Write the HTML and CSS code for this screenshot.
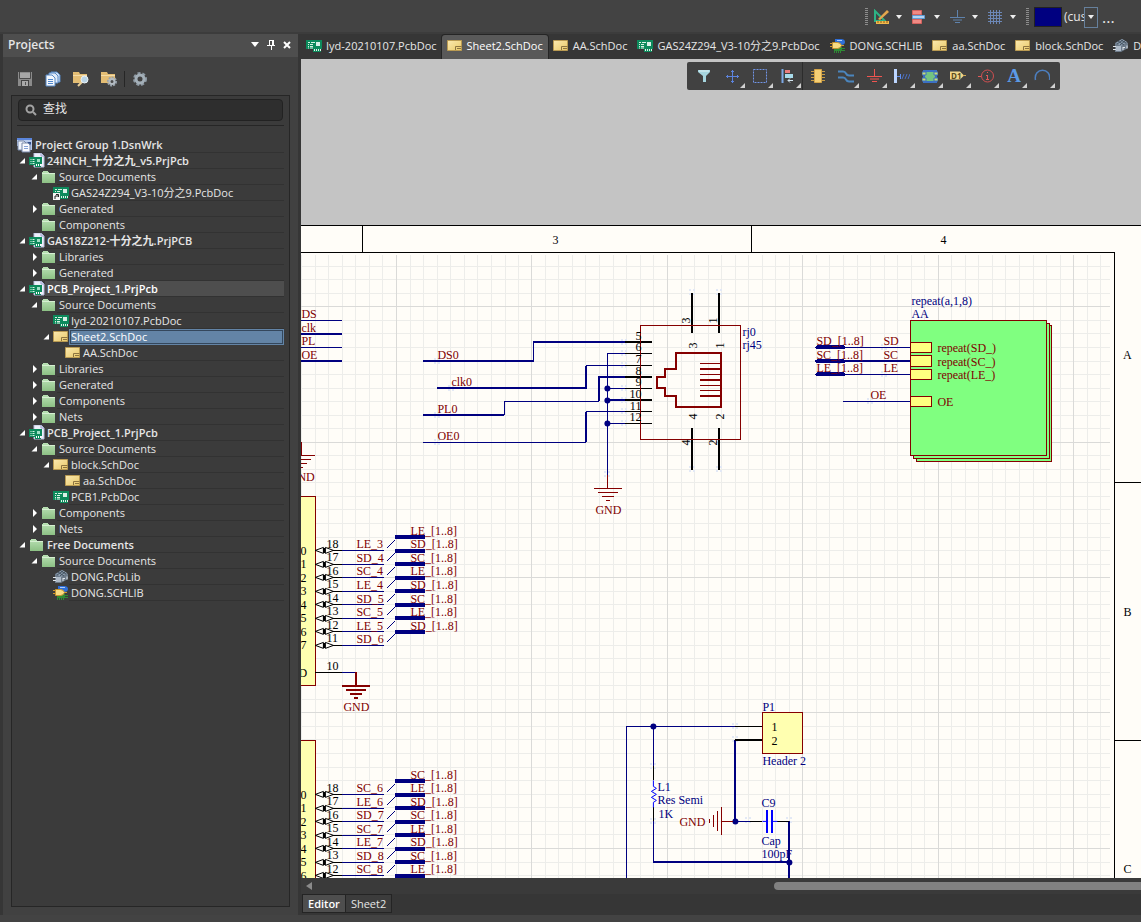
FILE: index.html
```html
<!DOCTYPE html>
<html lang="en">
<head>
<meta charset="utf-8">
<title>Sheet2.SchDoc</title>
<link rel="stylesheet" href="styles.css">
</head>
<body>
<svg class="defs" aria-hidden="true">
  <linearGradient id="gfold" x1="0" y1="0" x2="0" y2="1"><stop offset="0" stop-color="#b9e0b4"/><stop offset="1" stop-color="#8cc084"/></linearGradient>
  <linearGradient id="ysch" x1="0" y1="0" x2="1" y2="1"><stop offset="0" stop-color="#fbe9b0"/><stop offset="1" stop-color="#e9c968"/></linearGradient>
  <symbol id="folder" viewBox="0 0 16 16"><path d="M1 14V3h1V2h5v1h1v1h6v10z" fill="url(#gfold)"/><path d="M1 4.500h13" stroke="#d6efd2"/></symbol>
  <symbol id="sch" viewBox="0 0 16 16"><path d="M.5 2.500h14v10H.5z" fill="url(#ysch)" stroke="#b99a52"/><path d="M8.500 12V8.500h6M10 10.500h4" stroke="#8d7440" fill="none"/></symbol>
  <symbol id="pcb" viewBox="0 0 16 16"><path d="M0 2h16v9h-1v3H7v-3H0z" fill="#0d8a5c"/><path d="M2 4.500h2m1 0h4M2 6.500h1m1 0h3M2 8.500h1m1 0h3M2 10h1m1 0h3" stroke="#d9f3e4"/><path d="M10 4h4v4h-4z" fill="#d9efe6"/><path d="M8.500 11v2m2-2v2m2-2v2m2-2v2" stroke="#dff5ea"/></symbol>
  <symbol id="link" viewBox="0 0 16 16"><use href="#pcb"/><path d="M0 8h7v7H0z" fill="#f4f4f4"/><path d="M2 14v-3h3M3 9.500h2.500V12" stroke="#222" fill="none"/></symbol>
  <symbol id="prj" viewBox="0 0 16 16"><path d="M5 0h7l3 3v11H5z" fill="#eef0fb" stroke="#b9bddd"/><path d="M12 0v3h3" fill="none" stroke="#9aa0cc"/><path d="M0 4h13v7h-1v3H6v-2H0z" fill="#0d8a5c"/><path d="M1.500 6.500h4m-4 2h4m-4 2h4" stroke="#d9f3e4" stroke-dasharray="1 1 2"/><path d="M8 6h3v3H8z" fill="#9fe0c5"/><path d="M7.500 11v2m2-2v2m2-2v2" stroke="#fff"/></symbol>
  <symbol id="group" viewBox="0 0 16 16"><path d="M0 1h15v12H3V9H0z" fill="#b7caec"/><path d="M0 1h15v2H0z" fill="#5b86dc"/><path d="M1 4h6l2 2v7H1z" fill="#edf2fc" stroke="#7787a8"/><path d="M5 6h6l2 2v7H5z" fill="#f8faff" stroke="#7787a8"/><path d="M7 9.500h4m-4 2h4" stroke="#86a2d6"/><path d="M10 5h4v3z" fill="#324f8a"/></symbol>
  <symbol id="pcblib" viewBox="0 0 16 16"><path d="M2 5l7-4 6 4v5l-7 4H2z" fill="#6d7b8a"/><path d="M3 5l6-4 5 3-6 4z" fill="#8ea0b2"/><path d="M5 3l6 4M8 2l5 3M4 6l6-4M7 7l5-4" stroke="#44525f"/><path d="M3 8h5v5H3z" fill="#aebac7"/><path d="M0 8.500h3m-3 3h3M10 9.500h2m2-2v3M10 9v3" stroke="#dfe5ea" fill="none"/></symbol>
  <symbol id="schlib" viewBox="0 0 16 16"><path d="M5 1h6q4 0 4 3t-4 3H5z" fill="#2f6fd8"/><path d="M7 2h5v1H7z" fill="#a8cbff"/><path d="M4 9h8v4H4z" fill="#2f8a35"/><path d="M4.500 12v3m2-3v3m2-3v3m2-3v3M12 10.500h3m-3 2h3" stroke="#2f8a35"/><path d="M0 5.500h3m-3 3h3M11 7.500h3" stroke="#d39a2d"/><path d="M2.500 4.500h5q3 0 4 3-1 3-4 3h-5z" fill="#f8dc83" stroke="#c3922f"/></symbol>
  <symbol id="open" viewBox="0 0 8 8"><path d="M7 1v5.500H1.500z" fill="#fff"/></symbol>
  <symbol id="shut" viewBox="0 0 8 8"><path d="M3 0v8l4-4z" fill="#fff"/></symbol>
  <symbol id="drop" viewBox="0 0 8 8"><path d="M1 2h6L4 6z" fill="#eee"/></symbol>
  <symbol id="save" viewBox="0 0 16 16"><path d="M1 1h14v14H1z" fill="#8b8b8b"/><path d="M3 2h10v5H3z" fill="#a6a6a6"/><path d="M2.500 1v6.500h11V1" fill="none" stroke="#4a4a4a"/><path d="M4 9h8v6H4z" fill="#444"/><path d="M5 10h6v5H5z" fill="#aaa"/><path d="M8.500 11v3" stroke="#555"/></symbol>
  <symbol id="docs" viewBox="0 0 16 16"><path d="M6 1h6l3 3v7H6z" fill="#cfe0f4" stroke="#5788c4"/><path d="M4 2h6l3 3v7H4z" fill="#dfeaf8" stroke="#5788c4"/><path d="M1 4h6l3 3v8H1z" fill="#f2f7fd" stroke="#5788c4"/><path d="M3 8.500h5m-5 2h5m-5 2h5" stroke="#4f86cc"/></symbol>
  <symbol id="ffind" viewBox="0 0 16 16"><path d="M0 1h6l1 2h7v9H0z" fill="#e3bd74"/><path d="M0 4.500h14" stroke="#f4dba6"/><path d="M9 11l-4 4" stroke="#e9cf9a" stroke-width="2"/><circle cx="11.500" cy="8.500" r="3.500" fill="#b9d4e6" stroke="#e9f1f7"/></symbol>
  <symbol id="fgear" viewBox="0 0 16 16"><path d="M0 1h6l1 2h7v9H0z" fill="#e3bd74"/><path d="M0 4.500h14" stroke="#f4dba6"/><circle cx="11" cy="10.500" r="4" fill="none" stroke="#97a1aa" stroke-width="2" stroke-dasharray="2 1"/><circle cx="11" cy="10.500" r="2.500" fill="#4a4a4a" stroke="#b4bcc3" stroke-width="2"/></symbol>
  <symbol id="gear" viewBox="0 0 16 16"><circle cx="8" cy="8" r="6" fill="none" stroke="#8d99a3" stroke-width="2" stroke-dasharray="3 2"/><circle cx="8" cy="8" r="4" fill="none" stroke="#a3afb8" stroke-width="3"/></symbol>
  <symbol id="gnd" viewBox="0 0 16 16"><path d="M8.500 1v7M1 8.500h15M4 11h9M6 13.500h5" stroke="currentColor" fill="none"/></symbol>
</svg>

<header class="toolbar">
  <i class="grip"></i>
  <button class="tool" aria-label="Drawing tools"><svg class="icon"><path d="M2 2v10h10z" fill="none" stroke="#2db184" stroke-width="2"/><path d="M5 10l9-9 2 2-9 8z" fill="#e3a64d"/><path d="M3 12h13v3H3z" fill="#f2b94b"/><path d="M5 12v2m3-2v2m3-2v2m3-2v2" stroke="#8d5d1b"/></svg><svg class="drop"><use href="#drop"/></svg></button>
  <button class="tool" aria-label="Align"><svg class="icon"><path d="M1.500 1.500h9v4h-9zM1.500 10.500h9v4h-9z" fill="#ef8a84" stroke="#d4625e"/><path d="M1.500 6.500h12v3h-12z" fill="#b4d3f1" stroke="#5f9bd4"/></svg><svg class="drop"><use href="#drop"/></svg></button>
  <button class="tool slate" aria-label="Power port"><svg class="icon"><use href="#gnd"/></svg><svg class="drop"><use href="#drop"/></svg></button>
  <button class="tool" aria-label="Grid"><svg class="icon"><path d="M3.500 1v14m3-14v14m3-14v14m3-14v14M1 3.500h14m-14 3h14m-14 3h14m-14 3h14" stroke="#6c87b6"/></svg><svg class="drop"><use href="#drop"/></svg></button>
  <i class="grip second"></i>
  <i class="swatch"></i>
  <span class="custom">(cus</span>
  <button class="pick" aria-label="Color list"><svg class="drop"><use href="#drop"/></svg></button>
  <button class="more" aria-label="More">...</button>
</header>

<div class="work">
  <aside class="panel">
    <div class="head"><h2>Projects</h2>
      <button aria-label="Panel menu"><svg class="mini"><path d="M1 2h8L5 7z" fill="#fff"/></svg></button>
      <button aria-label="Pin"><svg class="mini"><path d="M3 0h5v5h1v1H6v4H5V6H1V5h2z" fill="#fff"/><path d="M4 1h2v4H4z" fill="#4e4e4e"/></svg></button>
      <button aria-label="Close"><svg class="mini"><path d="M2 2l6 6M8 2L2 8" stroke="#fff" stroke-width="2"/></svg></button>
    </div>
    <div class="actions">
      <button aria-label="Save"><svg class="icon"><use href="#save"/></svg></button>
      <button aria-label="Documents"><svg class="icon"><use href="#docs"/></svg></button>
      <button aria-label="Explore"><svg class="icon"><use href="#ffind"/></svg></button>
      <button aria-label="Project options"><svg class="icon"><use href="#fgear"/></svg></button>
      <i class="rule"></i>
      <button aria-label="Settings"><svg class="icon"><use href="#gear"/></svg></button>
    </div>
    <div class="box">
      <label class="search"><svg class="lens"><circle cx="5" cy="5" r="3.500" fill="none" stroke="#a2a2a2" stroke-width="2"/><path d="M8 8l3 3" stroke="#a2a2a2" stroke-width="2"/></svg><input type="text" placeholder="查找" aria-label="查找"></label>
      <ul class="tree">
        <li class="row root"><svg class="icon"><use href="#group"/></svg><span>Project Group 1.DsnWrk</span></li>
        <li class="row bold"><svg class="arrow"><use href="#open"/></svg><svg class="icon"><use href="#prj"/></svg><span>24INCH_十分之九_v5.PrjPcb</span></li>
        <li class="row l2"><svg class="arrow"><use href="#open"/></svg><svg class="icon"><use href="#folder"/></svg><span>Source Documents</span></li>
        <li class="row l3"><i class="arrow"></i><svg class="icon"><use href="#link"/></svg><span>GAS24Z294_V3-10分之9.PcbDoc</span></li>
        <li class="row l2"><svg class="arrow"><use href="#shut"/></svg><svg class="icon"><use href="#folder"/></svg><span>Generated</span></li>
        <li class="row l2"><i class="arrow"></i><svg class="icon"><use href="#folder"/></svg><span>Components</span></li>
        <li class="row bold"><svg class="arrow"><use href="#open"/></svg><svg class="icon"><use href="#prj"/></svg><span>GAS18Z212-十分之九.PrjPCB</span></li>
        <li class="row l2"><svg class="arrow"><use href="#shut"/></svg><svg class="icon"><use href="#folder"/></svg><span>Libraries</span></li>
        <li class="row l2"><svg class="arrow"><use href="#shut"/></svg><svg class="icon"><use href="#folder"/></svg><span>Generated</span></li>
        <li class="row bold current"><svg class="arrow"><use href="#open"/></svg><svg class="icon"><use href="#prj"/></svg><span>PCB_Project_1.PrjPcb</span></li>
        <li class="row l2"><svg class="arrow"><use href="#open"/></svg><svg class="icon"><use href="#folder"/></svg><span>Source Documents</span></li>
        <li class="row l3"><i class="arrow"></i><svg class="icon"><use href="#pcb"/></svg><span>Iyd-20210107.PcbDoc</span></li>
        <li class="row l3 selected"><svg class="arrow"><use href="#open"/></svg><svg class="icon"><use href="#sch"/></svg><span>Sheet2.SchDoc</span></li>
        <li class="row l4"><i class="arrow"></i><svg class="icon"><use href="#sch"/></svg><span>AA.SchDoc</span></li>
        <li class="row l2"><svg class="arrow"><use href="#shut"/></svg><svg class="icon"><use href="#folder"/></svg><span>Libraries</span></li>
        <li class="row l2"><svg class="arrow"><use href="#shut"/></svg><svg class="icon"><use href="#folder"/></svg><span>Generated</span></li>
        <li class="row l2"><svg class="arrow"><use href="#shut"/></svg><svg class="icon"><use href="#folder"/></svg><span>Components</span></li>
        <li class="row l2"><svg class="arrow"><use href="#shut"/></svg><svg class="icon"><use href="#folder"/></svg><span>Nets</span></li>
        <li class="row bold"><svg class="arrow"><use href="#open"/></svg><svg class="icon"><use href="#prj"/></svg><span>PCB_Project_1.PrjPcb</span></li>
        <li class="row l2"><svg class="arrow"><use href="#open"/></svg><svg class="icon"><use href="#folder"/></svg><span>Source Documents</span></li>
        <li class="row l3"><svg class="arrow"><use href="#open"/></svg><svg class="icon"><use href="#sch"/></svg><span>block.SchDoc</span></li>
        <li class="row l4"><i class="arrow"></i><svg class="icon"><use href="#sch"/></svg><span>aa.SchDoc</span></li>
        <li class="row l3"><i class="arrow"></i><svg class="icon"><use href="#pcb"/></svg><span>PCB1.PcbDoc</span></li>
        <li class="row l2"><svg class="arrow"><use href="#shut"/></svg><svg class="icon"><use href="#folder"/></svg><span>Components</span></li>
        <li class="row l2"><svg class="arrow"><use href="#shut"/></svg><svg class="icon"><use href="#folder"/></svg><span>Nets</span></li>
        <li class="row bold"><svg class="arrow"><use href="#open"/></svg><svg class="icon"><use href="#folder"/></svg><span>Free Documents</span></li>
        <li class="row l2"><svg class="arrow"><use href="#open"/></svg><svg class="icon"><use href="#folder"/></svg><span>Source Documents</span></li>
        <li class="row l3"><i class="arrow"></i><svg class="icon"><use href="#pcblib"/></svg><span>DONG.PcbLib</span></li>
        <li class="row l3"><i class="arrow"></i><svg class="icon"><use href="#schlib"/></svg><span>DONG.SCHLIB</span></li>
      </ul>
    </div>
  </aside>

  <main class="editor">
    <nav class="tabs">
      <button class="tab"><svg class="icon"><use href="#pcb"/></svg>Iyd-20210107.PcbDoc</button>
      <button class="tab active"><svg class="icon"><use href="#sch"/></svg>Sheet2.SchDoc</button>
      <button class="tab"><svg class="icon"><use href="#sch"/></svg>AA.SchDoc</button>
      <button class="tab"><svg class="icon"><use href="#pcb"/></svg>GAS24Z294_V3-10分之9.PcbDoc</button>
      <button class="tab"><svg class="icon"><use href="#schlib"/></svg>DONG.SCHLIB</button>
      <button class="tab"><svg class="icon"><use href="#sch"/></svg>aa.SchDoc</button>
      <button class="tab"><svg class="icon"><use href="#sch"/></svg>block.SchDoc</button>
      <button class="tab"><svg class="icon"><use href="#pcblib"/></svg>DONG.PcbLib</button>
    </nav>
    <div class="canvas">
      <svg class="sheet" role="img" aria-label="Schematic">
        <defs>
          <g id="arrowpin"><path d="M315 0L323 -3V3zM333 0L325 -3V3z" fill="#fffdf8" stroke="#000" shape-rendering="auto"/><path d="M324 -2V3" stroke="#000" stroke-width="2"/></g>
          <g id="hot"><path d="M-3 -2H-1M1 -2H3M-3 2H-1M1 2H3" stroke="#e3e9f6" stroke-width="2"/></g>
          <g id="chip"><rect class="part" x="280" y="496" width="35" height="189"/>
            <path class="bus" d="M395 537H425M395 551H425M395 564H425M395 578H425M395 591H425M395 605H425M395 618H425M395 632H425"/>
            <path class="pin" d="M315 550H342M315 564H342M315 577H342M315 591H342M315 604H342M315 618H342M315 631H342M315 645H342"/>
            <path class="wire" d="M342 550H384M342 564H384M342 577H384M342 591H384M342 604H384M342 618H384M342 631H384M342 645H384"/>
            <path class="slant" d="M386 548L394 540M386 561L394 553M386 575L394 567M386 588L394 580M386 602L394 594M386 615L394 607M386 629L394 621M386 642L394 634"/>
            <use href="#arrowpin" y="550"/><use href="#arrowpin" y="564"/><use href="#arrowpin" y="577"/><use href="#arrowpin" y="591"/><use href="#arrowpin" y="604"/><use href="#arrowpin" y="618"/><use href="#arrowpin" y="631"/><use href="#arrowpin" y="645"/>
            <g class="black"><text x="300" y="555">0</text><text x="300" y="568">1</text><text x="300" y="582">2</text><text x="300" y="595">3</text><text x="300" y="609">4</text><text x="300" y="622">5</text><text x="300" y="636">6</text><text x="300" y="649">7</text>
            <text x="326" y="548">18</text><text x="326" y="561">17</text><text x="326" y="575">16</text><text x="326" y="588">15</text><text x="326" y="602">14</text><text x="326" y="615">13</text><text x="326" y="629">12</text><text x="326" y="642">11</text></g>
          </g>
        </defs>
        <g class="world" transform="translate(-300.6 -58.6)">
          <rect x="280" y="225" width="1900" height="1400" fill="#fffdf8"/>
          <path class="minor" d="M301 255v900M315 255v900M328 255v900M342 255v900M355 255v900M369 255v900M382 255v900M410 255v900M423 255v900M437 255v900M450 255v900M464 255v900M477 255v900M491 255v900M505 255v900M518 255v900M545 255v900M558 255v900M572 255v900M585 255v900M599 255v900M613 255v900M626 255v900M640 255v900M653 255v900M681 255v900M694 255v900M708 255v900M721 255v900M735 255v900M748 255v900M762 255v900M775 255v900M789 255v900M816 255v900M829 255v900M843 255v900M857 255v900M870 255v900M884 255v900M897 255v900M911 255v900M924 255v900M951 255v900M965 255v900M978 255v900M992 255v900M1005 255v900M1019 255v900M1033 255v900M1046 255v900M1060 255v900M1087 255v900M1100 255v900"/>
          <path class="minor" d="M301 266h809M301 279h809M301 293h809M301 320h809M301 333h809M301 347h809M301 361h809M301 374h809M301 388h809M301 401h809M301 415h809M301 428h809M301 455h809M301 469h809M301 482h809M301 496h809M301 509h809M301 523h809M301 537h809M301 550h809M301 564h809M301 591h809M301 604h809M301 618h809M301 631h809M301 645h809M301 658h809M301 672h809M301 685h809M301 699h809M301 726h809M301 739h809M301 753h809M301 767h809M301 780h809M301 794h809M301 807h809M301 821h809M301 834h809M301 862h809M301 875h809"/>
          <path class="major" d="M396 255v900M531 255v900M667 255v900M802 255v900M938 255v900M1073 255v900M301 306h809M301 442h809M301 577h809M301 712h809M301 848h809"/>
          <path class="pin" d="M280 225H2200M280 252H1114V1400M362 225V252M751 225V252M1114 482H2200M1114 740H2200"/>
          <g class="black mid"><text x="555" y="244">3</text><text x="943" y="244">4</text><text x="1127" y="359">A</text><text x="1127" y="616">B</text><text x="1127" y="873">C</text></g>

          <use href="#hot" x="437" y="361"/><use href="#hot" x="451" y="388"/><use href="#hot" x="437" y="415"/><use href="#hot" x="437" y="442"/><use href="#hot" x="624" y="342"/><use href="#hot" x="624" y="353"/><use href="#hot" x="624" y="365"/><use href="#hot" x="624" y="388"/><use href="#hot" x="624" y="400"/><use href="#hot" x="624" y="411"/><use href="#hot" x="624" y="423"/><use href="#hot" x="607" y="474"/><use href="#hot" x="692" y="292"/><use href="#hot" x="719" y="292"/><use href="#hot" x="692" y="469"/><use href="#hot" x="719" y="469"/><use href="#hot" x="884" y="347"/><use href="#hot" x="884" y="374"/><use href="#hot" x="870" y="401"/><use href="#hot" x="735" y="726"/><use href="#hot" x="735" y="739"/><use href="#hot" x="653" y="766"/><use href="#hot" x="653" y="821"/><use href="#hot" x="748" y="820"/><use href="#hot" x="789" y="820"/>

          <path class="wire" d="M300 320H342M300 347H342"/><path class="wire thick" d="M300 334H342M300 361H342"/>
          <path class="red" d="M301 442V455M301 455H315M301 459H311M301 463H307M301 467H303"/>
          <g class="maroon"><text x="301" y="318">DS</text><text x="301" y="332">clk</text><text x="301" y="345">PL</text><text x="301" y="359">OE</text><text x="297" y="481">ND</text>
          <text x="437" y="359">DS0</text><text x="451" y="386">clk0</text><text x="437" y="413">PL0</text><text x="437" y="440">OE0</text></g>
          <path class="wire thick" d="M423 361H534M533 342H625M437 388H586V366M423 415H504M599 401V377H625M586 442V412M607 400H625"/>
          <path class="wire" d="M533 361V342M586 365H625M504 415V401H599M423 442H586M586 411H625M625 353H607V475M607 388H625M607 423H625"/>
          <path class="pin" d="M625 353H652M625 365H652M625 388H652M625 411H652M625 423H652"/>
          <path class="pin thick" d="M625 342H652M625 377H652M625 400H652M692 293V333M719 293V333M692 428V470M719 428V470"/>
          <g class="node"><circle cx="607" cy="388" r="3"/><circle cx="607" cy="400" r="3"/><circle cx="607" cy="423" r="3"/><circle cx="653" cy="726" r="3"/><circle cx="735" cy="821" r="3"/><circle cx="789" cy="862" r="3"/></g>
          <path class="red" d="M607 475V488M594 488H622M598 492H618M602 496H614M606 500H610M640 325H740V439H640zM700 363H721M700 374H721M700 385H721M700 390H721"/>
          <path class="red thick" d="M676 353H721V407H676V396H665V388H657V377H665V369H676zM700 369H721M700 380H721M700 396H721"/>
          <g class="black end"><text x="641" y="340">5</text><text x="641" y="351">6</text><text x="641" y="363">7</text><text x="641" y="375">8</text><text x="641" y="386">9</text><text x="641" y="398">10</text><text x="641" y="410">11</text><text x="641" y="421">12</text></g>
          <g class="black"><text transform="translate(690 323) rotate(-90)">3</text><text transform="translate(717 323) rotate(-90)">1</text><text transform="translate(697 348) rotate(-90)">3</text><text transform="translate(724 348) rotate(-90)">1</text><text transform="translate(697 419) rotate(-90)">4</text><text transform="translate(724 419) rotate(-90)">2</text><text transform="translate(690 445) rotate(-90)">4</text><text transform="translate(717 445) rotate(-90)">2</text></g>
          <text class="maroon mid" x="608" y="514">GND</text>

          <g fill="#80ff80" class="red"><rect x="916" y="325" width="135" height="136"/><rect x="913" y="323" width="136" height="135"/><rect x="910" y="320" width="136" height="135"/></g>
          <path class="wire" d="M815 347H910M815 374H910M843 401H910"/><path class="wire thick" d="M815 361H910"/>
          <path class="bus round" d="M817 347H843M817 361H843M817 374H843"/>
          <g fill="#ffff80" class="red"><rect x="910" y="342" width="21" height="10"/><rect x="910" y="355" width="21" height="11"/><rect x="910" y="369" width="21" height="10"/><rect x="910" y="396" width="21" height="10"/></g>
          <g class="maroon"><text x="816" y="345">SD_[1..8]</text><text x="816" y="359">SC_[1..8]</text><text x="816" y="372">LE_[1..8]</text><text x="883" y="345">SD</text><text x="883" y="359">SC</text><text x="883" y="372">LE</text><text x="870" y="399">OE</text><text x="937" y="352">repeat(SD_)</text><text x="937" y="366">repeat(SC_)</text><text x="937" y="379">repeat(LE_)</text><text x="937" y="406">OE</text></g>

          <use href="#chip"/><use href="#chip" y="244"/>
          <path class="pin" d="M315 672H342"/><path class="wire" d="M342 672H356"/>
          <path class="red thick" d="M356 672V686M342 686H370M346 690H366M350 694H362M354 698H358"/>
          <g class="black"><text x="326" y="670">10</text><text x="298" y="677">D</text></g>
          <g class="maroon"><text class="mid" x="356" y="711">GND</text>
          <text x="356" y="548">LE_3</text><text x="356" y="562">SD_4</text><text x="356" y="575">SC_4</text><text x="356" y="589">LE_4</text><text x="356" y="603">SD_5</text><text x="356" y="616">SC_5</text><text x="356" y="630">LE_5</text><text x="356" y="643">SD_6</text>
          <text x="356" y="792">SC_6</text><text x="356" y="806">LE_6</text><text x="356" y="819">SD_7</text><text x="356" y="833">SC_7</text><text x="356" y="846">LE_7</text><text x="356" y="860">SD_8</text><text x="356" y="873">SC_8</text>
          <text x="410" y="535">LE_[1..8]</text><text x="410" y="548">SD_[1..8]</text><text x="410" y="562">SC_[1..8]</text><text x="410" y="575">LE_[1..8]</text><text x="410" y="589">SD_[1..8]</text><text x="410" y="603">SC_[1..8]</text><text x="410" y="616">LE_[1..8]</text><text x="410" y="630">SD_[1..8]</text>
          <text x="410" y="779">SC_[1..8]</text><text x="410" y="792">LE_[1..8]</text><text x="410" y="806">SD_[1..8]</text><text x="410" y="819">SC_[1..8]</text><text x="410" y="833">LE_[1..8]</text><text x="410" y="846">SD_[1..8]</text><text x="410" y="860">SC_[1..8]</text><text x="410" y="873">LE_[1..8]</text></g>

          <rect class="part" x="762" y="712" width="40" height="41"/>
          <path class="wire" d="M626 1200V726H735M653 726V766M653 821V862M735 821H750"/>
          <path class="wire thick" d="M735 740V821M653 862H789M789 821V1200"/>
          <path class="pin" d="M735 726H762M653 766V780M653 807V821M750 821H762M777 821H789"/>
          <path class="pin thick" d="M735 740H762"/>
          <path d="M653 780V786L656 788L651 791L656 794L651 797L656 800L653 802V807M762 821H766M772 821H777" class="symbol"/>
          <path d="M767 810V833M772 810V833" class="plate"/>
          <path class="red" d="M722 821H733M721 807V835M717 811V831M713 815V827M709 819V823"/>
          <g class="black"><text x="771" y="731">1</text><text x="771" y="745">2</text></g>
          <text class="maroon" x="679" y="826">GND</text>
          <g class="navy"><text x="911" y="305">repeat(a,1,8)</text><text x="911" y="318">AA</text><text x="742" y="336">rj0</text><text x="742" y="349">rj45</text><text x="762" y="711">P1</text><text x="762" y="765">Header 2</text><text x="657" y="791">L1</text><text x="657" y="804">Res Semi</text><text x="658" y="818">1K</text><text x="761" y="807">C9</text><text x="761" y="845">Cap</text><text x="761" y="858">100pF</text></g>
        </g>
      </svg>
      <div class="float">
        <button aria-label="Filter"><svg class="icon"><path d="M2 2h12v2L10 8v6H7V8L2 4z" fill="#a5d5df"/><path d="M3 3h10" stroke="#dff3f6"/></svg></button>
        <button class="sub" aria-label="Move"><svg class="icon"><path d="M8.500 2v13M2 8.500h13" stroke="#5c83dd"/><path d="M7 3.500h3M7 13.500h3M3.500 7v3M13.500 7v3" stroke="#5c83dd"/></svg></button>
        <button class="sub" aria-label="Select"><svg class="icon"><path d="M1.500 1.500h13v13h-13z" fill="none" stroke="#7194e6" stroke-dasharray="2 1"/></svg></button>
        <button class="sub" aria-label="Align"><svg class="icon"><path d="M2.500 1v14" stroke="#7da8e4" stroke-width="2"/><path d="M5 2h5v3H5z" fill="#ea7d7d"/><path d="M5 6h8v4H5z" fill="#a8dceb"/><path d="M8 12.500h5M8 12.500l2-2M8 12.500l2 2" stroke="#d4e6f2" fill="none"/></svg></button>
        <button class="split" aria-label="Place part"><svg class="icon"><path d="M1 3.500h14M1 6.500h14M1 9.500h14M1 12.500h14" stroke="#c69b45"/><path d="M4.500 1.500h7v13h-7z" fill="#f5cf74" stroke="#d5a548"/></svg></button>
        <button class="sub" aria-label="Wire"><svg class="icon"><path d="M0 3.500h5q2 0 3 2t3 2h5M0 9.500h5q2 0 3 2t3 2h5" fill="none" stroke="#4b85bd" stroke-width="2"/></svg></button>
        <button class="sub ruby" aria-label="Power port"><svg class="icon"><use href="#gnd"/></svg></button>
        <button class="sub" aria-label="Harness"><svg class="icon"><path d="M0 1h3v14H0z" fill="#bcd5ff"/><path d="M3 8.500h4M6.500 6v5" stroke="#5e8ef0"/><path d="M8 11l2-5m1 5l2-5m1 5l2-5" stroke="#4a6fc2"/></svg></button>
        <button class="sub" aria-label="Sheet symbol"><svg class="icon"><path d="M2 3h12v11H2z" fill="#74c480" stroke="#3b70c4" stroke-width="2"/><path d="M0 4h4v3H0zM12 4h4v3h-4zM0 10h4v3H0zM12 10h4v3h-4z" fill="#c8dd77" stroke="#3f70bd"/></svg></button>
        <button class="sub" aria-label="Port"><svg class="icon"><path d="M0 3.500h10l4 4-4 4H0z" fill="#f0d58a"/><path d="M13 7.500h3" stroke="#cfa850"/><text x="1" y="11" class="port">D1</text></svg></button>
        <button class="sub" aria-label="Directive"><svg class="icon"><circle cx="9.500" cy="8" r="6" fill="none" stroke="#d04f50"/><path d="M0 8.500h3M9.500 7v5M8 11.500h3M8 7.500h1M9 4.500h1" stroke="#e05a5a"/></svg></button>
        <button class="sub" aria-label="Text"><span class="letter">A</span></button>
        <button class="sub" aria-label="Arc"><svg class="icon"><path d="M1.500 12C-1 -1 18 -1 15.500 12" fill="none" stroke="#4c7fc0" stroke-width="1.500"/></svg></button>
      </div>
    </div>
    <div class="scroll"><i class="left"></i><i class="thumb"></i></div>
    <div class="views"><button class="view on">Editor</button><button class="view">Sheet2</button></div>
  </main>
</div>
<footer class="status"></footer>
</body>
</html>
```
FILE: styles.css
```css
* { box-sizing: border-box; }
body { margin: 0; height: 100vh; display: flex; flex-direction: column; overflow: hidden; background: #363636; color: #e6e6e6; font: 11px/16px "Open Sans", "Noto Sans CJK SC", sans-serif; }
button { margin: 0; padding: 0; border: 0; background: none; color: inherit; font: inherit; }
svg { display: block; flex: none; }
.defs { position: absolute; width: 0; height: 0; }
.icon { width: 16px; height: 16px; }
.drop { width: 8px; height: 8px; }

.toolbar { height: 34px; flex: none; display: flex; align-items: center; justify-content: flex-end; padding: 2px 27px 0 0; background: #434343; border-bottom: 2px solid #3c3c3c; }
.grip { width: 3px; height: 18px; margin-right: 5px; background: repeating-linear-gradient(#8c8c8c 0 1px, #434343 1px 2px); }
.grip.second { margin-left: 1px; }
.tool { display: flex; align-items: center; gap: 6px; width: 38px; }
.slate { color: #5f82ab; }
.swatch { width: 28px; height: 20px; background: #000080; border: 1px solid #222; }
.custom { width: 22px; padding-left: 2px; overflow: hidden; font-size: 12px; }
.pick { width: 14px; height: 21px; border: 1px solid #66809c; display: grid; place-items: center; }
.more { width: 16px; padding-left: 4px; font-size: 16px; line-height: 20px; }

.work { flex: 1; min-height: 0; display: flex; padding-left: 3px; }
.panel { width: 295px; flex: none; display: flex; flex-direction: column; background: #414141; padding-bottom: 8px; }
.head { height: 23px; display: flex; align-items: center; gap: 6px; padding: 0 6px 1px 5px; background: #4e4e4e; }
.head h2 { flex: 1; margin: 0; font-size: 12px; font-weight: 600; }
.mini { width: 10px; height: 10px; }
.actions { height: 38px; display: flex; align-items: center; gap: 12px; padding: 6px 14px 0; }
.actions .rule { width: 1px; height: 16px; margin: 0 -5px; background: #262626; }
.box { flex: 1; margin: 0 8px; padding: 3px 6px; background: #3b3b3b; border: 1px solid #262626; }
.search { display: flex; align-items: center; height: 22px; padding-left: 6px; background: #2e2e2e; border: 1px solid #222; border-radius: 4px; }
.lens { width: 12px; height: 12px; margin-right: 6px; }
.search input { flex: 1; min-width: 0; padding: 0 0 2px; border: 0; outline: 0; background: none; color: #e6e6e6; font: inherit; font-size: 12px; }
.search input::placeholder { color: #e6e6e6; opacity: 1; }
.tree { list-style: none; margin: 4px -1px 0; padding: 11px 0 0; border-top: 1px solid #262626; }
.row { display: flex; height: 16px; }
.row span { flex: 1; padding-left: 2px; line-height: 15px; border-bottom: 1px solid #323232; white-space: nowrap; overflow: hidden; }
.arrow { width: 8px; height: 8px; margin: 4px 3px 4px 1px; flex: none; }
.root, .bold { font-weight: 600; }
.l2 { padding-left: 12px; }
.l3 { padding-left: 24px; }
.l4 { padding-left: 36px; }
.current span { background: #4e4e4e; color: #fff; }
.selected span { line-height: 13px; padding-left: 1px; background: #6384a6; border: 1px solid #6384a6; box-shadow: inset 0 0 0 1px #34475c; color: #fff; }

.editor { flex: 1; min-width: 0; display: flex; flex-direction: column; padding-left: 3px; }
.tabs { height: 25px; flex: none; display: flex; padding-top: 1px; overflow: hidden; }
.tab { flex: none; display: flex; align-items: center; gap: 4px; padding: 0 5px 2px; white-space: nowrap; }
.active { background: #595959; border-radius: 3px 3px 0 0; box-shadow: 0 0 0 1px #252525; color: #fff; }
.canvas { position: relative; flex: 1; min-height: 0; overflow: hidden; background: #c4c4c4; }
.sheet { width: 100%; height: 100%; }
.world { shape-rendering: crispEdges; font: 12px "Liberation Serif", serif; }
.minor { stroke: #ededea; }
.major { stroke: #dadad8; }
.pin { stroke: #000; fill: none; }
.wire { stroke: #000080; fill: none; }
.slant { stroke: #000080; }
.red { stroke: #850000; }
path.red { fill: none; }
.thick { stroke-width: 2; }
.bus { stroke: #000080; stroke-width: 4; }
.round { stroke-linecap: round; }
.symbol { fill: none; stroke: #00f; shape-rendering: auto; }
.plate { stroke: #00f; stroke-width: 2; }
.part { fill: #ffffb0; stroke: #850000; }
.node { fill: #000080; shape-rendering: auto; }
.black { fill: #000; }
.maroon { fill: #800000; }
.navy { fill: #000080; }
.mid { text-anchor: middle; }
.end { text-anchor: end; }

.float { position: absolute; top: 3px; right: 81px; display: flex; height: 28px; padding: 0 4px 0 3px; background: #414141; border-radius: 2px; }
.float button { position: relative; width: 28px; display: grid; place-items: center; }
.sub::after { content: ""; position: absolute; right: 1px; bottom: 2px; border-left: 5px solid transparent; border-bottom: 5px solid #d0d0d0; }
.float .split { width: 30px; padding-left: 1px; border: solid #2c2c2c; border-width: 0 0 0 1px; }
.ruby { color: #f05550; }
.port { font: bold 8px "Open Sans", sans-serif; fill: #5b4a1d; }
.letter { font: bold 19px/20px "Liberation Serif", serif; color: #5b9ae6; }

.scroll { height: 16px; flex: none; display: flex; align-items: center; background: #3a3a3a; padding-left: 5px; }
.left { border: 4px solid transparent; border-left: 0; border-right: 6px solid #8a8a8a; }
.thumb { width: 44%; height: 8px; margin-left: auto; background: #818181; border-radius: 4px 0 0 4px; }
.views { height: 21px; flex: none; display: flex; padding-left: 1px; }
.view { height: 19px; padding: 0 5px; background: #3c3c3c; border: 1px solid #242424; }
.view + .view { margin-left: -1px; }
.on { background: #4e4e4e; font-weight: 600; color: #fff; }
.status { height: 7px; flex: none; background: #434343; }
```
